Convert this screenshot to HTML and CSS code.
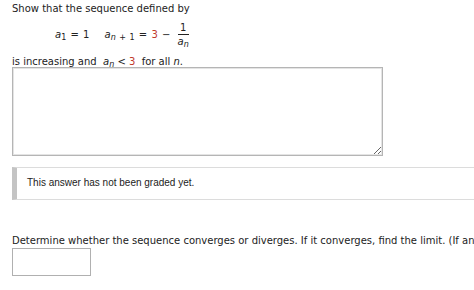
FILE: index.html
```html
<!DOCTYPE html>
<html>
<head>
<meta charset="utf-8">
<link rel="stylesheet" href="styles.css">
</head>
<body>
<div class="page">
  <p class="line first">Show that the sequence defined by</p>
  <div class="math">
    <span class="term"><i>a</i><sub>1</sub> = 1</span>
    <span class="term"><i>a</i><sub><i>n</i> + 1</sub> = <span class="red">3</span> &minus; <span class="frac"><span class="num">1</span><span class="den"><i>a</i><sub><i>n</i></sub></span></span></span>
  </div>
  <p class="line">is increasing and&nbsp; <i>a</i><sub><i>n</i></sub> &lt; <span class="red">3</span>&nbsp; for all <i>n</i>.</p>
  <textarea class="answer"></textarea>
  <div class="graded">This answer has not been graded yet.</div>
  <p class="line second">Determine whether the sequence converges or diverges. If it converges, find the limit. (If an answer does not exist, enter DNE.)</p>
  <div class="input"></div>
</div>
</body>
</html>
```
FILE: styles.css
```css
html, body {
  margin: 0;
  padding: 0;
  background: #fff;
  overflow: hidden;
}
.page {
  padding-left: 12px;
  font-family: "DejaVu Sans", Verdana, sans-serif;
  font-size: 10px;
  color: #222;
  width: 462px;
  overflow: hidden;
}
.line {
  margin: 0;
  line-height: 13px;
  white-space: nowrap;
  overflow: hidden;
}
.first {
  padding-top: 2px;
}
sub {
  font-size: 8px;
  vertical-align: -2px;
  line-height: 0;
}
i {
  font-style: italic;
}
.red {
  color: #c0392b;
}
.math {
  padding-left: 43px;
  height: 40px;
  line-height: 40px;
  white-space: nowrap;
}
.term {
  margin-right: 12px;
  word-spacing: 1px;
}
.frac {
  display: inline-block;
  vertical-align: middle;
  text-align: center;
  margin-left: 3px;
  line-height: 11px;
  position: relative;
  top: -1px;
}
.num {
  display: block;
  border-bottom: 1px solid #222;
  padding: 0 1px 1px;
}
.den {
  display: block;
  padding-top: 1px;
}
.answer {
  display: block;
  box-sizing: border-box;
  width: 371px;
  height: 89px;
  margin: -1px 0 0;
  border: 1px solid #b5b5b5;
  box-shadow: inset 0 0 0 1px #e4e4e4;
  resize: both;
  font: inherit;
}
.graded {
  box-sizing: border-box;
  margin-top: 11px;
  height: 33px;
  border-top: 1px solid #dcdcdc;
  border-bottom: 1px solid #dcdcdc;
  border-left: 5px solid #c4c4c4;
  padding-left: 10px;
  padding-bottom: 2px;
  display: flex;
  align-items: center;
  font-family: "Liberation Sans", Arial, sans-serif;
  font-size: 10px;
  color: #222;
}
.second {
  margin-top: 34px;
}
.input {
  margin-top: 1px;
  box-sizing: border-box;
  width: 79px;
  height: 28px;
  border: 1px solid #b0b0b0;
}
```
